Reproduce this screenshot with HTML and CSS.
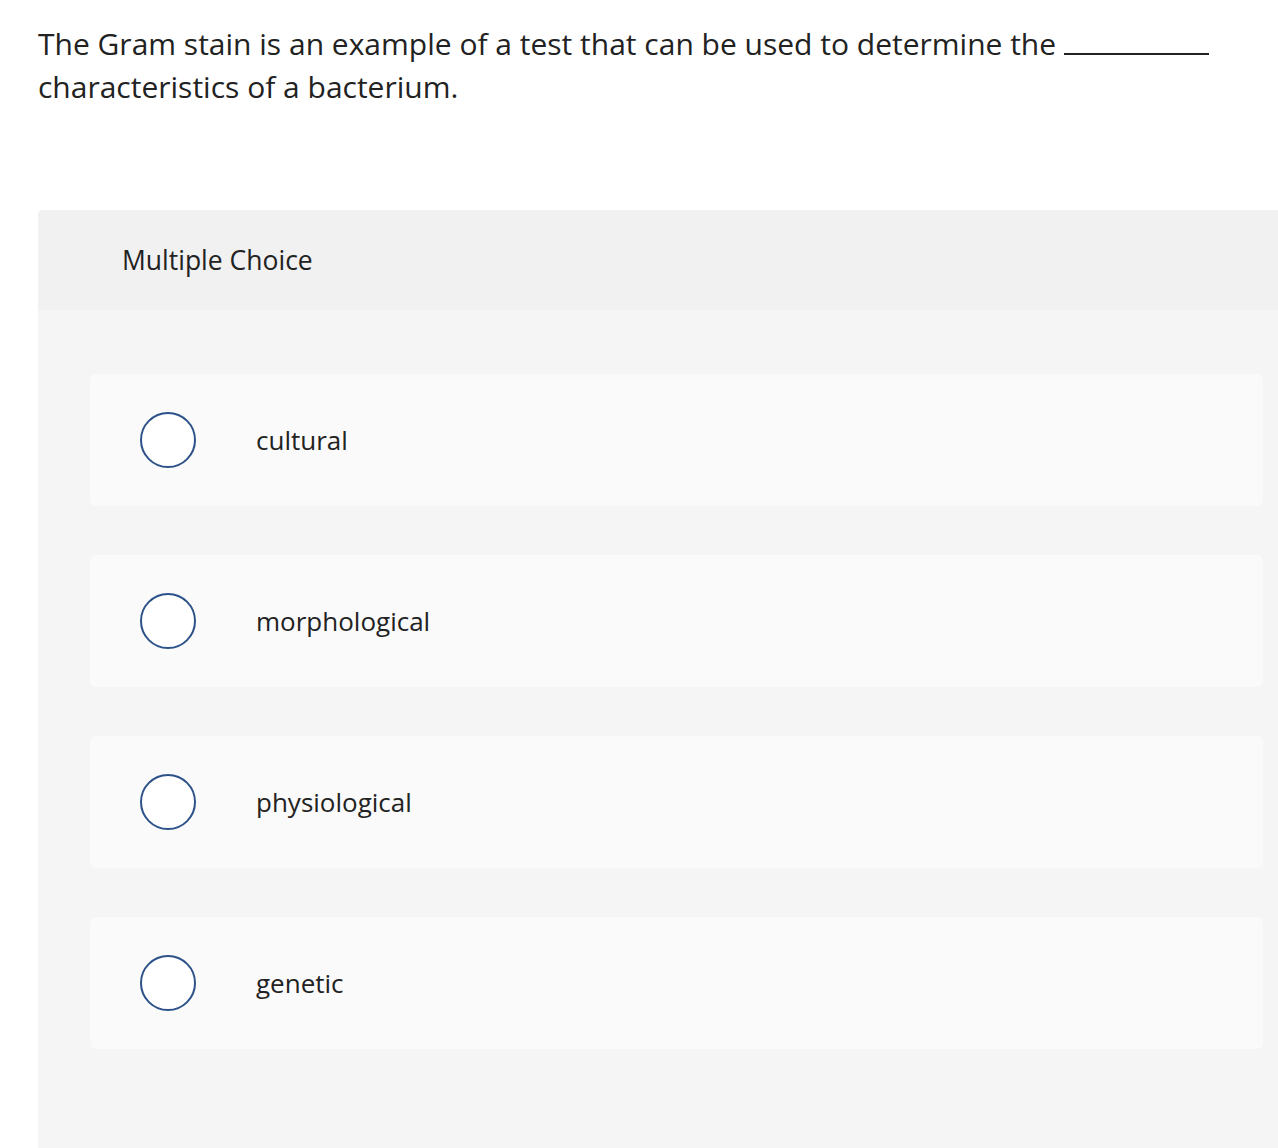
FILE: index.html
```html
<!DOCTYPE html>
<html lang="en">
  <head>
    <meta charset="UTF-8">
    <meta name="viewport" content="width=device-width, initial-scale=1">
    <title>Multiple Choice</title>
    <link rel="stylesheet" href="styles.css">
  </head>
  <body>
    <main class="question">
      <p class="prompt">
        The Gram stain is an example of a test that can be used to determine the
        <span class="blank"></span>
        characteristics of a bacterium.
      </p>

      <section class="panel">
        <header class="panel__head">Multiple Choice</header>

        <div class="panel__body">
          <label class="choice">
            <span class="radio"></span>
            <span class="choice__text">cultural</span>
          </label>
          <label class="choice">
            <span class="radio"></span>
            <span class="choice__text">morphological</span>
          </label>
          <label class="choice">
            <span class="radio"></span>
            <span class="choice__text">physiological</span>
          </label>
          <label class="choice">
            <span class="radio"></span>
            <span class="choice__text">genetic</span>
          </label>
        </div>
      </section>
    </main>
  </body>
</html>
```

FILE: styles.css
```css
:root {
  --text: #222;
  --head-bg: #f1f1f1;
  --body-bg: #f5f5f5;
  --card-bg: #fafafa;
  --radio: #2c5288;
}

html,
body {
  margin: 0;
  overflow: hidden;
}

body {
  background: #fff;
  color: var(--text);
  font-family: "Open Sans", "Noto Sans", sans-serif;
}

.question {
  padding: 22px 0 0 38px;
}

.prompt {
  margin: 0;
  width: 1200px;
  font-size: 30px;
  line-height: 43px;
}

.blank {
  display: inline-block;
  width: 145px;
  border-bottom: 2px solid var(--text);
  vertical-align: baseline;
}

.panel {
  margin-top: 102px;
  border-top-left-radius: 5px;
  overflow: hidden;
  background: var(--body-bg);
  min-height: 940px;
}

.panel__head {
  height: 100px;
  display: flex;
  align-items: center;
  padding-left: 84px;
  background: var(--head-bg);
  font-size: 26.5px;
}

.panel__body {
  display: flex;
  flex-direction: column;
  gap: 49px;
  padding: 64px 15px 0 52px;
}

.choice {
  display: flex;
  align-items: center;
  height: 132px;
  padding-left: 50px;
  background: var(--card-bg);
  border-radius: 6px;
  font-size: 26px;
}

.radio {
  box-sizing: border-box;
  width: 56px;
  height: 56px;
  border: 2px solid var(--radio);
  border-radius: 50%;
  background: #fff;
  flex-shrink: 0;
}

.choice__text {
  margin-left: 60px;
}
```
